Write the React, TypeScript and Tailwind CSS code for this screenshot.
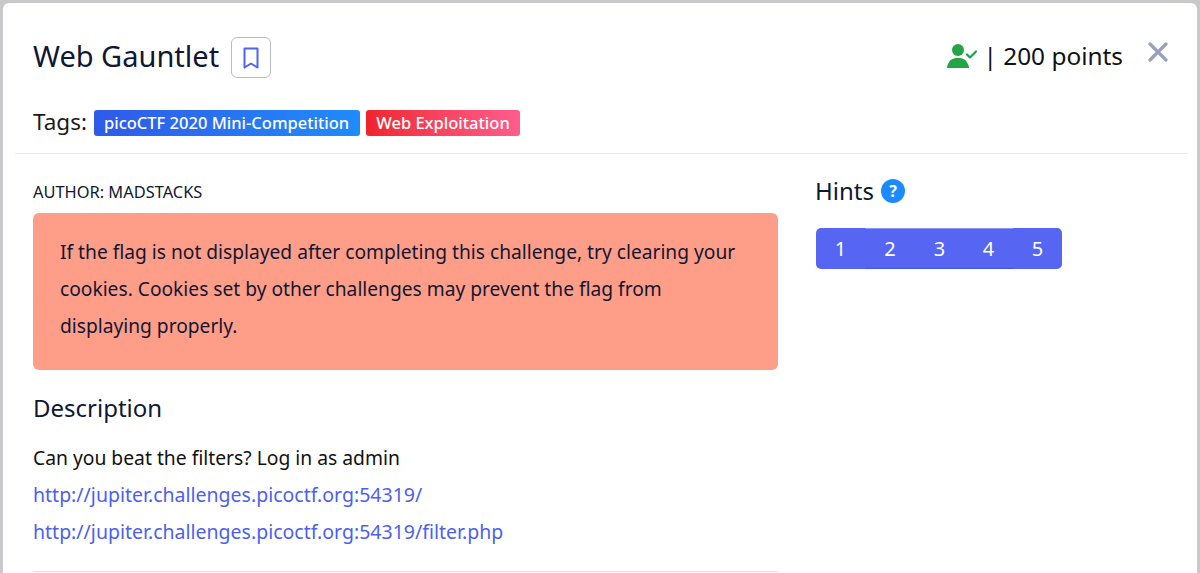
const BookmarkIcon = () => (
  <svg width="16" height="22" viewBox="0 0 16 22" fill="none" stroke="#4f63f5" strokeWidth="2" strokeLinejoin="round">
    <path d="M1.500 1.500h13v19L8 16.500 1.500 20.500z" />
  </svg>
);

const UserCheckIcon = () => (
  <svg width="30" height="24" viewBox="0 0 30 24">
    <circle cx="11" cy="6" r="6" fill="#22a447" />
    <path d="M0 24c0-1.500.4-3 1.500-4.800C3 15.500 6 14 11 14s8 1.500 9.500 5.200c1.100 1.800 1.500 3.300 1.500 4.800z" fill="#22a447" />
    <path d="M20 10.500l3 3 6-6" fill="none" stroke="#16a34a" strokeWidth="2.200" strokeLinecap="round" strokeLinejoin="round" />
  </svg>
);

const CloseIcon = () => (
  <svg width="20" height="20" viewBox="0 0 20 20" fill="none" stroke="#98a1bb" strokeWidth="3.200" strokeLinecap="round">
    <path d="M2 2l16 16M18 2L2 18" />
  </svg>
);

const App = () => {
  return (
    <div className="h-[573px] overflow-hidden bg-[#c9c9cb] px-[3px] pt-[3px] font-['Noto_Sans','Open_Sans',sans-serif]">
      <div className="h-[570px] overflow-hidden rounded-t-md bg-white text-[#0f1733]">
        <header className="ml-3 mr-[9px] border-b border-[#e9ecef] pb-[15px]">
          <div className="flex h-[74px] items-start justify-between pt-[34px] pl-[18px] pr-[20px]">
            <div className="flex items-start gap-[12px]">
              <h1 className="text-[29px] leading-[38px]">Web Gauntlet</h1>
              <button className="flex h-[41px] w-[40px] items-center justify-center rounded-md border border-[#b5bccb] bg-white">
                <BookmarkIcon />
              </button>
            </div>
            <div className="flex items-center">
              <UserCheckIcon />
              <span className="ml-[6px] text-[24.4px] leading-[38px] text-[#111111]">| 200 points</span>
              <span className="ml-[25px] -mt-2">
                <CloseIcon />
              </span>
            </div>
          </div>
          <div className="mt-[31px] flex items-center pl-[18px]">
            <span className="mb-[3px] text-[22.5px] leading-[27px] text-[#1a1a1a]">Tags:</span>
            <span className="ml-[7px] rounded-[3px] bg-gradient-to-r from-[#2f5ae8] to-[#1f8bfb] pl-[10px] pr-[11px] text-[16.5px] leading-[26px] font-medium text-white">
              picoCTF 2020 Mini-Competition
            </span>
            <span className="ml-[6px] rounded-[3px] bg-gradient-to-r from-[#f0232b] to-[#ff5c8d] px-[10px] text-[16.5px] leading-[26px] font-medium text-white">
              Web Exploitation
            </span>
          </div>
        </header>
        <div className="flex pl-[30px] pt-[28px]">
          <main className="w-[745px]">
            <p className="text-[16.4px] leading-[20px] text-[#0f1733]">AUTHOR: MADSTACKS</p>
            <div className="mt-[11px] rounded-md bg-[#ff9e88] pl-[27px] pr-[20px] pt-[20px] pb-[26px] text-[19.2px] leading-[37px]">
              If the flag is not displayed after completing this challenge, try clearing your cookies. Cookies set by other challenges may prevent the flag from displaying properly.
            </div>
            <h2 className="mt-[20px] text-[24px] leading-[36px]">Description</h2>
            <p className="mt-[13px] text-[19.3px] leading-[37px] text-[#111111]">Can you beat the filters? Log in as admin</p>
            <a className="block text-[19.5px] leading-[37px] text-[#4c5ff0]">http://jupiter.challenges.picoctf.org:54319/</a>
            <a className="block text-[19.5px] leading-[37px] text-[#4c5ff0]">http://jupiter.challenges.picoctf.org:54319/filter.php</a>
            <div className="mt-[21px] border-t border-[#dfe1e6]" />
          </main>
          <aside className="ml-[37px]">
            <div className="-mt-[3px] flex items-center gap-[7px]">
              <h2 className="text-[24px] leading-[24px]">Hints</h2>
              <span className="flex h-6 w-6 items-center justify-center rounded-full bg-[#1a8cff] text-[16px] leading-none font-bold text-white">?</span>
            </div>
            <div className="ml-px mt-[25px] flex h-[41px] w-[246px] items-center text-[20px] text-white">
              <span className="flex h-full w-[49px] items-center justify-center rounded-l-[5px] bg-[#5766f2]">1</span>
              <span className="flex h-full w-[50px] items-center justify-center border-y border-t-[#8a96f7] border-b-[#4453ea] bg-[#5766f2]">2</span>
              <span className="flex h-full w-[49px] items-center justify-center border-y border-t-[#8a96f7] border-b-[#4453ea] bg-[#5766f2]">3</span>
              <span className="flex h-full w-[49px] items-center justify-center border-y border-t-[#8a96f7] border-b-[#4453ea] bg-[#5766f2]">4</span>
              <span className="flex h-full w-[49px] items-center justify-center rounded-r-[5px] bg-[#5766f2]">5</span>
            </div>
          </aside>
        </div>
      </div>
    </div>
  );
};

export default App;
